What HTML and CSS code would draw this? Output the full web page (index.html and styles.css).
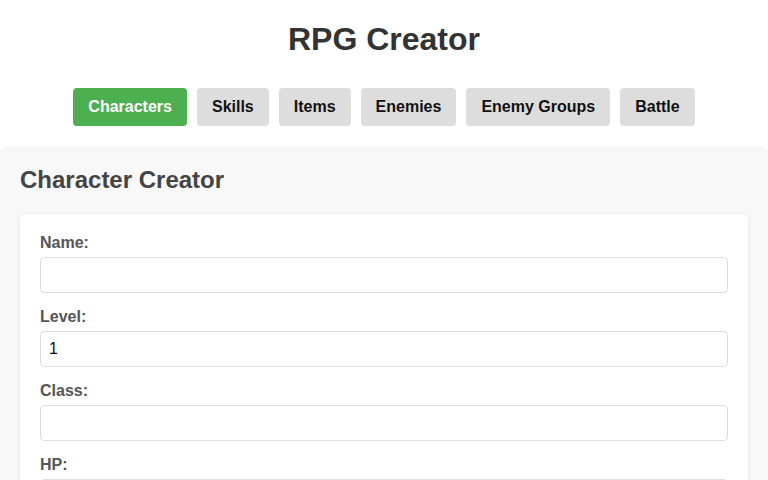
FILE: index.html
```html
<!DOCTYPE html>
<html>
<head>
<meta charset="utf-8">
<link rel="stylesheet" href="styles.css">
</head>
<body>
<header class="header">
  <h1 class="title">RPG Creator</h1>
  <nav class="tabs">
    <button class="tab active">Characters</button>
    <button class="tab">Skills</button>
    <button class="tab">Items</button>
    <button class="tab">Enemies</button>
    <button class="tab">Enemy Groups</button>
    <button class="tab">Battle</button>
  </nav>
</header>
<section class="panel">
  <h2 class="panel-title">Character Creator</h2>
  <div class="card">
    <label class="label">Name:</label>
    <input class="field" type="text" value="">
    <label class="label">Level:</label>
    <input class="field" type="number" value="1">
    <label class="label">Class:</label>
    <input class="field" type="text" value="">
    <label class="label">HP:</label>
    <input class="field" type="number" value="100">
  </div>
</section>
</body>
</html>
```

FILE: styles.css
```css
html, body {
  margin: 0;
  padding: 0;
  background: #ffffff;
  font-family: "Liberation Sans", Arial, sans-serif;
  overflow: hidden;
}
.header {
  padding-top: 21px;
}
.title {
  margin: 0;
  text-align: center;
  font-size: 32px;
  line-height: 37px;
  font-weight: bold;
  color: #333333;
}
.tabs {
  display: flex;
  justify-content: center;
  gap: 10px;
  margin-top: 30px;
}
.tab {
  border: none;
  border-radius: 4px;
  background: #dddddd;
  color: #111111;
  font-family: "Liberation Sans", Arial, sans-serif;
  font-size: 16px;
  font-weight: bold;
  line-height: 18px;
  padding: 10px 15px;
  height: 38px;
}
.tab.active {
  background: #4caf50;
  color: #ffffff;
}
.panel {
  margin-top: 20px;
  background: #f8f8f8;
  border-radius: 8px;
  padding: 20px;
  min-height: 400px;
}
.panel-title {
  margin: 0 0 20px 0;
  font-size: 24px;
  line-height: 28px;
  font-weight: bold;
  color: #444444;
}
.card {
  background: #ffffff;
  border-radius: 5px;
  box-shadow: 0 0 4px rgba(0, 0, 0, 0.08);
  padding: 20px;
}
.label {
  display: block;
  font-size: 16px;
  line-height: 18px;
  font-weight: bold;
  color: #555555;
  margin-bottom: 5px;
}
.field {
  display: block;
  box-sizing: border-box;
  width: 100%;
  height: 36px;
  padding: 8px;
  border: 1px solid #dddddd;
  border-radius: 4px;
  font-family: "Liberation Sans", Arial, sans-serif;
  font-size: 16px;
  color: #111111;
  margin-bottom: 15px;
  -moz-appearance: textfield;
}
.field::-webkit-inner-spin-button,
.field::-webkit-outer-spin-button {
  -webkit-appearance: none;
  margin: 0;
}
```
